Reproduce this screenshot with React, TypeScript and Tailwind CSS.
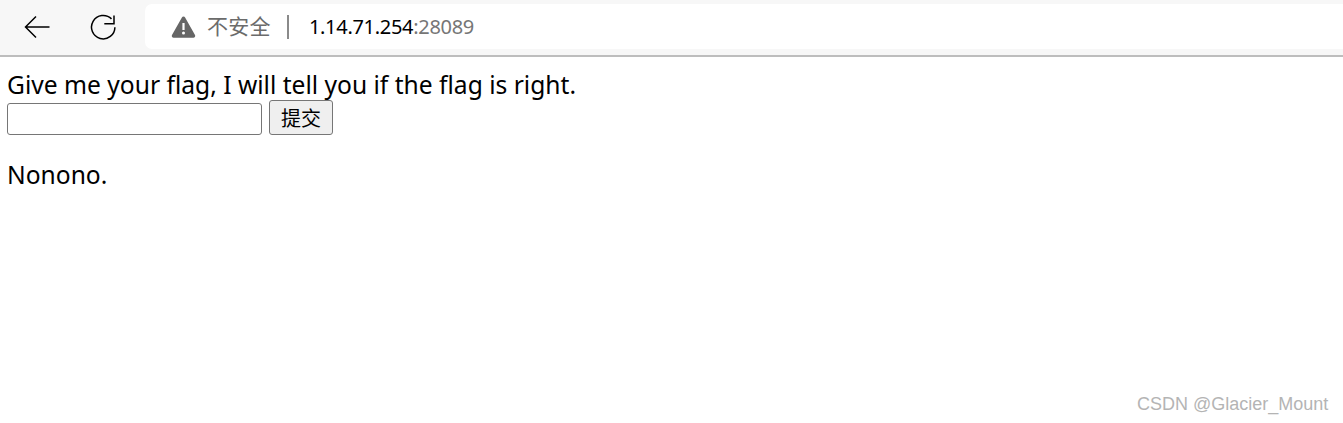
const sans = 'font-["Noto_Sans","Noto_Sans_CJK_SC",sans-serif]';

function BackIcon() {
    return (
        <svg viewBox="0 0 26 24" fill="none" stroke="#000" strokeWidth={1.5} className="ml-[24px] h-[24px] w-[26px] shrink-0">
            <path d="M1.5 12H25.5M12 1.5 1.5 12 12 22.5" />
        </svg>
    );
}

function ReloadIcon() {
    return (
        <svg viewBox="0 0 26 26" fill="none" stroke="#000" strokeWidth={1.5} className="ml-[40px] h-[26px] w-[26px] shrink-0">
            <path d="M21.5 4.9A11.7 11.7 0 1 0 24.9 13.2" />
            <path d="M24 1.5v8.3h-9.7" />
        </svg>
    );
}

function WarningIcon() {
    return (
        <svg viewBox="0 0 24 22" className="h-[22px] w-[25px] shrink-0">
            <path
                fillRule="evenodd"
                fill="#666666"
                d="M12 0.5c.7 0 1.3.4 1.6 1l9.9 17.6c.7 1.2-.2 2.7-1.6 2.7H2.1c-1.4 0-2.3-1.5-1.6-2.7L10.4 1.5c.3-.6.9-1 1.6-1zM10.9 7v7h2.2V7h-2.2zM12 15.6a1.5 1.5 0 1 0 0 3 1.5 1.5 0 0 0 0-3z"
            />
        </svg>
    );
}

function Toolbar() {
    return (
        <div className="flex h-[57px] items-start border-b-2 border-[#bdbdbd] bg-[#f7f7f7]">
            <div className="flex h-[53px] w-[145px] shrink-0 items-center">
                <BackIcon />
                <ReloadIcon />
            </div>
            <div className="mt-[4px] flex h-[45px] flex-1 items-center rounded-l-[7px] bg-white pl-[26px]">
                <WarningIcon />
                <span className="ml-[11px] text-[21px] leading-none tracking-[0.3px] text-[#6b6b6b]">不安全</span>
                <span className="ml-[16px] h-[24px] w-[2px] bg-[#8a8a8a]" />
                <span className="ml-[20px] text-[20px] leading-none tracking-[-0.3px] text-black">
                    1.14.71.254<span className="text-[#767676]">:28089</span>
                </span>
            </div>
        </div>
    );
}

export default function App() {
    return (
        <div className={`relative h-[423px] w-[1343px] overflow-hidden bg-white ${sans}`}>
            <Toolbar />
            <div className="px-[7px] pt-[13px] text-[24.6px] leading-[30px] text-black">
                <div className="h-[30px] whitespace-nowrap">Give me your flag, I will tell you if the flag is right.</div>
                <form className="flex h-[35px] items-end">
                    <input
                        type="text"
                        className="h-[32px] w-[255px] rounded-[3px] border border-[#767676] bg-white"
                    />
                    <button
                        type="button"
                        className="ml-[7px] h-[35px] w-[64px] rounded-[3px] border border-[#767676] bg-[#efefef] pt-[3px] text-[20px] leading-none text-black"
                    >
                        提交
                    </button>
                </form>
                <p className="mt-[25px]">Nonono.</p>
            </div>
            <span className="absolute left-[1137px] top-[393px] whitespace-nowrap font-['Liberation_Sans',sans-serif] text-[18px] leading-[22px] text-[#b4b4b4]">
                CSDN @Glacier_Mount
            </span>
        </div>
    );
}
